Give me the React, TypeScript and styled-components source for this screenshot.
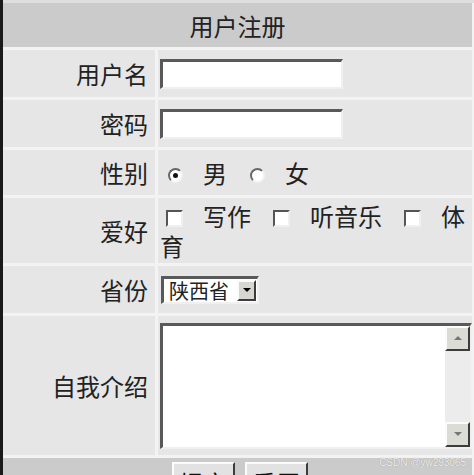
import styled, { createGlobalStyle, css } from 'styled-components';

const GlobalStyle = createGlobalStyle`
  html, body {
    margin: 0;
    padding: 0;
    overflow: hidden;
    background: #1a1a1a;
  }
  body {
    font-family: "Noto Sans CJK SC", "Noto Sans", sans-serif;
  }
`;

const Page = styled.div`
  position: relative;
  box-sizing: border-box;
  height: 475px;
  margin-left: 3px;
  padding-top: 3px;
  background: #dedede;
  overflow: hidden;
`;

const Form = styled.form`
  display: grid;
  grid-template-columns: 152px 314px;
  grid-template-rows: 44px 47px 47px 45px 65px 47px 139px 60px;
  gap: 3px;
  width: fit-content;
  padding-right: 2px;
  background: #f3f3f3;
  color: #222;
  font-size: 24px;
`;

const Title = styled.div`
  grid-column: 1 / -1;
  display: flex;
  align-items: center;
  justify-content: center;
  background: #cbcbcb;
`;

const Label = styled.div`
  display: flex;
  align-items: center;
  justify-content: flex-end;
  padding-right: 7px;
  background: #e6e6e6;
`;

const Field = styled.div`
  display: flex;
  align-items: center;
  padding-left: 2px;
  background: #e6e6e6;
`;

const Flow = styled.div`
  width: 100%;
  line-height: 30px;
`;

const sunken = css`
  box-sizing: border-box;
  border-style: solid;
  border-width: 3px 2px 2px 3px;
  border-color: #595959 #f0f0f0 #f0f0f0 #595959;
  background: #fff;
`;

const raised = css`
  box-sizing: border-box;
  border-style: solid;
  border-width: 2px;
  border-color: #fbfbfb #3c3c3c #3c3c3c #fbfbfb;
  background: #d8d6d0;
`;

const TextBox = styled.input`
  ${sunken}
  width: 183px;
  height: 30px;
  padding: 0 4px;
  font-size: 18px;
  outline: none;
`;

const RadioMark = styled.span<{ $checked?: boolean; $first?: boolean }>`
  position: relative;
  display: inline-block;
  box-sizing: border-box;
  width: 15px;
  height: 15px;
  margin: 0 20px 0 ${p => (p.$first ? 8 : 23)}px;
  vertical-align: middle;
  border-radius: 50%;
  border: 2px solid;
  border-color: #666 #f2f2f2 #f2f2f2 #666;
  background: #fff;
  &::after {
    content: '';
    display: ${p => (p.$checked ? 'block' : 'none')};
    position: absolute;
    left: 3px;
    top: 3px;
    width: 5px;
    height: 5px;
    border-radius: 50%;
    background: #111;
  }
`;

const CheckMark = styled.span<{ $first?: boolean }>`
  display: inline-block;
  box-sizing: border-box;
  width: 17px;
  height: 17px;
  margin: 0 20px 0 ${p => (p.$first ? 6 : 22)}px;
  vertical-align: middle;
  border-style: solid;
  border-width: 2px;
  border-color: #555 #f0f0f0 #f0f0f0 #555;
  background: #fff;
`;

const Select = styled.div`
  ${sunken}
  display: inline-flex;
  align-items: center;
  justify-content: space-between;
  width: 98px;
  height: 28px;
  margin-left: 1px;
  padding: 0 1px 0 5px;
  font-size: 20px;
`;

const DropButton = styled.span`
  ${raised}
  display: flex;
  align-items: center;
  justify-content: center;
  width: 19px;
  height: 21px;
`;

const Arrow = styled.span<{ $up?: boolean; $color?: string }>`
  width: 0;
  height: 0;
  border-left: 4px solid transparent;
  border-right: 4px solid transparent;
  ${p =>
    p.$up
      ? `border-bottom: 4px solid ${p.$color || '#000'};`
      : `border-top: 4px solid ${p.$color || '#000'};`}
`;

const Memo = styled.div`
  ${sunken}
  display: flex;
  width: 312px;
  height: 126px;
`;

const MemoText = styled.div`
  flex: 1;
`;

const ScrollBar = styled.div`
  display: flex;
  flex-direction: column;
  justify-content: space-between;
  width: 25px;
  background: #ececec;
`;

const ScrollButton = styled.span`
  ${raised}
  display: flex;
  align-items: center;
  justify-content: center;
  height: 25px;
  background: #dcdcd6;
`;

const Footer = styled.div`
  grid-column: 1 / -1;
  display: flex;
  justify-content: center;
  align-items: flex-start;
  gap: 10px;
  padding: 4px 0 0 5px;
  background: #cbcbcb;
`;

const Button = styled.button`
  ${raised}
  width: 63px;
  height: 40px;
  padding: 0;
  background: #e2e2e2;
  color: #111;
  font-family: inherit;
  font-size: 24px;
`;

const Watermark = styled.span`
  position: absolute;
  right: 8px;
  top: 457px;
  font-family: "Liberation Sans", sans-serif;
  font-size: 10px;
  color: #eeeeee;
  text-shadow: 0 0 1px #8a8a8a;
`;

export default function App() {
  return (
    <>
      <GlobalStyle />
      <Page>
        <Form>
          <Title>用户注册</Title>

          <Label>用户名</Label>
          <Field>
            <TextBox type="text" />
          </Field>

          <Label>密码</Label>
          <Field>
            <TextBox type="password" />
          </Field>

          <Label>性别</Label>
          <Field>
            <Flow>
              <RadioMark $first $checked />男<RadioMark />女
            </Flow>
          </Field>

          <Label>爱好</Label>
          <Field>
            <Flow>
              <CheckMark $first />写作<CheckMark />听音乐<CheckMark />体育
            </Flow>
          </Field>

          <Label>省份</Label>
          <Field>
            <Select>
              陕西省
              <DropButton>
                <Arrow />
              </DropButton>
            </Select>
          </Field>

          <Label>自我介绍</Label>
          <Field>
            <Memo>
              <MemoText />
              <ScrollBar>
                <ScrollButton>
                  <Arrow $up $color="#777" />
                </ScrollButton>
                <ScrollButton>
                  <Arrow $color="#777" />
                </ScrollButton>
              </ScrollBar>
            </Memo>
          </Field>

          <Footer>
            <Button type="button">提交</Button>
            <Button type="button">重置</Button>
          </Footer>
        </Form>
        <Watermark>CSDN @yw293065</Watermark>
      </Page>
    </>
  );
}
